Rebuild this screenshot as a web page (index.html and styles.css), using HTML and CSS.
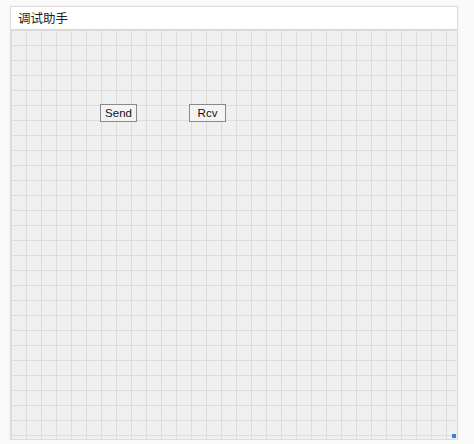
FILE: index.html
```html
<!DOCTYPE html>
<html lang="zh">
<head>
  <meta charset="UTF-8" />
  <meta name="viewport" content="width=device-width, initial-scale=1.0" />
  <title>调试助手</title>
  <link rel="stylesheet" href="styles.css">
</head>
<body>
  <div class="panel">
    <div class="header">调试助手</div>
    <div class="canvas">
      <button class="btn btn-send">Send</button>
      <button class="btn btn-rcv">Rcv</button>
      <span class="resize"></span>
    </div>
  </div>
</body>
</html>
```

FILE: styles.css
```css
body {
  margin: 0;
  background: #fafafa;
  font-family: "Liberation Sans", Arial, "Noto Sans CJK SC", sans-serif;
}

.panel {
  margin: 6px 0 0 10px;
  width: 446px;
  height: 432px;
  border: 1px solid #dcdcdc;
  display: flex;
  flex-direction: column;
  box-shadow: 0 0 3px rgba(0, 0, 0, 0.06);
}

.header {
  height: 22px;
  line-height: 22px;
  padding-left: 7px;
  background: #ffffff;
  border-bottom: 1px solid #d8d8d8;
  font-family: "Noto Sans CJK SC", sans-serif;
  font-size: 12.5px;
  color: #222;
}

.canvas {
  flex: 1;
  position: relative;
  background-color: #f0f0f0;
  background-image:
    linear-gradient(to right, #dcdcdc 1px, transparent 1px),
    linear-gradient(to bottom, #dcdcdc 1px, transparent 1px);
  background-size: 15px 15px;
  background-position: 0 0;
}

.btn {
  position: absolute;
  top: 74px;
  width: 37px;
  height: 18px;
  padding: 0;
  border: 1px solid #8a8a8a;
  background: #f4f4f4;
  font-family: "Liberation Sans", Arial, sans-serif;
  font-size: 11.5px;
  color: #111;
}

.btn-send {
  left: 89px;
}

.btn-rcv {
  left: 178px;
}

.resize {
  position: absolute;
  right: 1px;
  bottom: 1px;
  width: 4px;
  height: 4px;
  background: #3a7fd8;
}
```
